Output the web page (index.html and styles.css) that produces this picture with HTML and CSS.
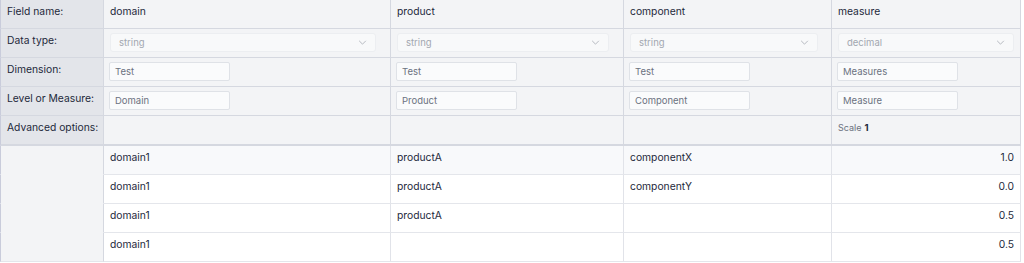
FILE: index.html
```html
<!DOCTYPE html>
<html>
<head>
<meta charset="utf-8">
<link rel="stylesheet" href="styles.css">
</head>
<body>
<div class="grid">
  <div class="cell lab">Field name:</div>
  <div class="cell hd">domain</div>
  <div class="cell hd">product</div>
  <div class="cell hd">component</div>
  <div class="cell hd">measure</div>

  <div class="cell lab">Data type:</div>
  <div class="cell hd"><div class="sel w2"><span>string</span><svg class="chev" viewBox="0 0 10 6"><path d="M1 1l4 4 4-4"/></svg></div></div>
  <div class="cell hd"><div class="sel w3"><span>string</span><svg class="chev" viewBox="0 0 10 6"><path d="M1 1l4 4 4-4"/></svg></div></div>
  <div class="cell hd"><div class="sel w4"><span>string</span><svg class="chev" viewBox="0 0 10 6"><path d="M1 1l4 4 4-4"/></svg></div></div>
  <div class="cell hd"><div class="sel w5"><span>decimal</span><svg class="chev" viewBox="0 0 10 6"><path d="M1 1l4 4 4-4"/></svg></div></div>

  <div class="cell lab">Dimension:</div>
  <div class="cell hd"><div class="inp">Test</div></div>
  <div class="cell hd"><div class="inp">Test</div></div>
  <div class="cell hd"><div class="inp">Test</div></div>
  <div class="cell hd"><div class="inp">Measures</div></div>

  <div class="cell lab">Level or Measure:</div>
  <div class="cell hd"><div class="inp">Domain</div></div>
  <div class="cell hd"><div class="inp">Product</div></div>
  <div class="cell hd"><div class="inp">Component</div></div>
  <div class="cell hd"><div class="inp">Measure</div></div>

  <div class="cell lab last">Advanced options:</div>
  <div class="cell hd last"></div>
  <div class="cell hd last"></div>
  <div class="cell hd last"></div>
  <div class="cell hd last"><span class="scale">Scale</span> <b class="scalev">1</b></div>

  <div class="cell side"></div>
  <div class="cell d odd">domain1</div>
  <div class="cell d odd">productA</div>
  <div class="cell d odd">componentX</div>
  <div class="cell d odd num">1.0</div>

  <div class="cell side"></div>
  <div class="cell d">domain1</div>
  <div class="cell d">productA</div>
  <div class="cell d">componentY</div>
  <div class="cell d num">0.0</div>

  <div class="cell side"></div>
  <div class="cell d">domain1</div>
  <div class="cell d">productA</div>
  <div class="cell d"></div>
  <div class="cell d num">0.5</div>

  <div class="cell side sidelast"></div>
  <div class="cell d">domain1</div>
  <div class="cell d"></div>
  <div class="cell d"></div>
  <div class="cell d num">0.5</div>
</div>
</body>
</html>
```
FILE: styles.css
```css
* { box-sizing: border-box; }
html, body { margin: 0; padding: 0; background: #ffffff; }
body {
  font-family: Inter, Roboto, "Liberation Sans", sans-serif;
  font-size: 10.3px;
  color: #1e293b;
}
.grid {
  display: grid;
  grid-template-columns: 104px 287px 233px 208px 189px;
  grid-template-rows: 29px 29px 29px 29px 30px 29px 29px 29px 29px;
  width: 1021px;
}
.cell {
  border-right: 1px solid #d5d8e0;
  border-bottom: 1px solid #d5d8e0;
  padding: 4px 6px 0 6px;
  line-height: 14px;
  overflow: hidden;
  white-space: nowrap;
}
.lab {
  background: #e3e5ea;
  border-left: 1px solid #c9ccdb;
  padding-left: 6px;
}
.hd { background: #f3f4f6; }
.last { border-bottom: 2px solid #d5d8e0; }
.side {
  background: #f3f4f6;
  border-left: 1px solid #c9ccdb;
  border-bottom-color: #f3f4f6;
  border-right-color: #d5d8e0;
}
.side.sidelast { border-bottom-color: #e4e6eb; }
.d { background: #ffffff; border-bottom-color: #e4e6eb; border-right-color: #e1e3e9; }
.d.odd { background: #f8f9fb; }
.num { text-align: right; }

.sel {
  height: 19px;
  background: #f8f9fa;
  border: 1px solid #eceef1;
  border-radius: 3px;
  display: flex;
  align-items: center;
  justify-content: space-between;
  padding: 0 8px 0 8px;
  color: #a2a7b0;
  font-size: 9.5px;
}
.w2 { width: 266px; }
.w3 { width: 212px; }
.w4 { width: 188px; }
.w5 { width: 176px; }
.chev {
  width: 9px;
  height: 5px;
  fill: none;
  stroke: #a8adb6;
  stroke-width: 1;
}
.inp {
  margin-left: -1px;
  width: 121px;
  height: 19px;
  background: #fafbfc;
  border: 1px solid #dfe2e7;
  border-radius: 2px;
  padding: 0 5px;
  display: flex;
  align-items: center;
  color: #6b7280;
  font-size: 9.5px;
}
.scale { color: #6b7280; font-size: 9px; }
.scalev { font-weight: 700; color: #1e293b; font-size: 9.5px; }
```
